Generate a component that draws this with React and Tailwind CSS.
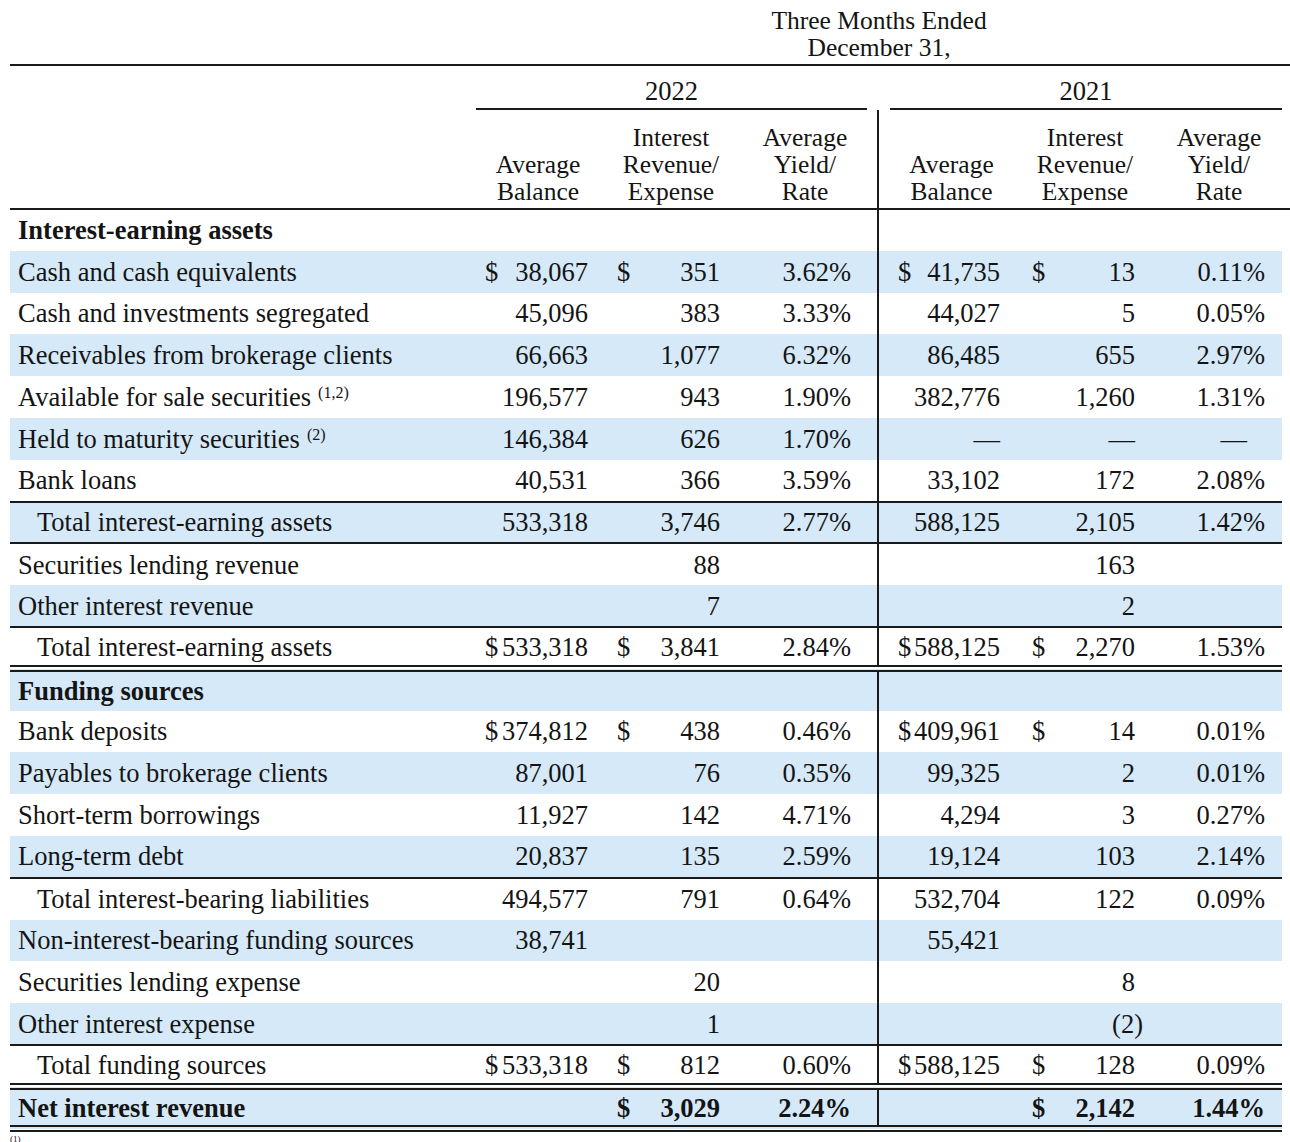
import React from "react";

// each row: label, 6 values (2022 balance/interest/yield, 2021 balance/interest/yield)
const rows = [
  { label: "Interest-earning assets", bold: true, values: ["", "", "", "", "", ""] },
  { label: "Cash and cash equivalents", dollar: true, values: ["38,067", "351", "3.62%", "41,735", "13", "0.11%"] },
  { label: "Cash and investments segregated", values: ["45,096", "383", "3.33%", "44,027", "5", "0.05%"] },
  { label: "Receivables from brokerage clients", values: ["66,663", "1,077", "6.32%", "86,485", "655", "2.97%"] },
  { label: "Available for sale securities", sup: "(1,2)", values: ["196,577", "943", "1.90%", "382,776", "1,260", "1.31%"] },
  { label: "Held to maturity securities", sup: "(2)", values: ["146,384", "626", "1.70%", "—", "—", "—"] },
  { label: "Bank loans", line: "single", values: ["40,531", "366", "3.59%", "33,102", "172", "2.08%"] },
  { label: "Total interest-earning assets", indent: true, line: "single", values: ["533,318", "3,746", "2.77%", "588,125", "2,105", "1.42%"] },
  { label: "Securities lending revenue", values: ["", "88", "", "", "163", ""] },
  { label: "Other interest revenue", line: "single", values: ["", "7", "", "", "2", ""] },
  { label: "Total interest-earning assets", indent: true, dollar: true, line: "double", values: ["533,318", "3,841", "2.84%", "588,125", "2,270", "1.53%"] },
  { label: "Funding sources", bold: true, values: ["", "", "", "", "", ""] },
  { label: "Bank deposits", dollar: true, values: ["374,812", "438", "0.46%", "409,961", "14", "0.01%"] },
  { label: "Payables to brokerage clients", values: ["87,001", "76", "0.35%", "99,325", "2", "0.01%"] },
  { label: "Short-term borrowings", values: ["11,927", "142", "4.71%", "4,294", "3", "0.27%"] },
  { label: "Long-term debt", line: "single", values: ["20,837", "135", "2.59%", "19,124", "103", "2.14%"] },
  { label: "Total interest-bearing liabilities", indent: true, values: ["494,577", "791", "0.64%", "532,704", "122", "0.09%"] },
  { label: "Non-interest-bearing funding sources", values: ["38,741", "", "", "55,421", "", ""] },
  { label: "Securities lending expense", values: ["", "20", "", "", "8", ""] },
  { label: "Other interest expense", line: "single", values: ["", "1", "", "", "(2)", ""] },
  { label: "Total funding sources", indent: true, dollar: true, line: "double", values: ["533,318", "812", "0.60%", "588,125", "128", "0.09%"] },
  { label: "Net interest revenue", bold: true, dollar: true, line: "double", values: ["", "3,029", "2.24%", "", "2,142", "1.44%"] },
];

const pads = [
  "pl-[9px] pr-[12px]",
  "pl-[17px] pr-[13px]",
  "pr-[26px]",
  "pl-[19px] pr-[12px]",
  "pl-[20px] pr-[13px]",
  "pr-[17px]",
];

const headPads = ["", "pl-[9px]", "", "pl-[12px]", "pl-[10px]", "pl-[8px]"];

const heads = [
  ["Average", "Balance"],
  ["Interest", "Revenue/", "Expense"],
  ["Average", "Yield/", "Rate"],
  ["Average", "Balance"],
  ["Interest", "Revenue/", "Expense"],
  ["Average", "Yield/", "Rate"],
];

function ValueCell({ value, index, dollar, border }) {
  const isYield = index === 2 || index === 5;
  const divider = index === 2 ? "border-r-2 border-r-[#1a1a1a]" : "";
  let extra = "";
  if (value === "(2)") extra = "-mr-[8px]";
  if (value === "—" && index === 5) extra = "mr-[18px]";

  if (isYield) {
    return (
      <td className={`${pads[index]} ${divider} ${border} text-right`}>
        <span className={`inline-block ${extra}`}>{value}</span>
      </td>
    );
  }
  return (
    <td className={`${pads[index]} ${divider} ${border}`}>
      <div className="flex justify-between">
        <span>{dollar && value ? "$" : ""}</span>
        <span className={extra}>{value}</span>
      </div>
    </td>
  );
}

export default function App() {
  return (
    <div className="w-[1290px] h-[1142px] overflow-hidden bg-white text-[#141414] text-[26.5px] font-['Liberation_Serif','Times_New_Roman',serif]">
      <table className="ml-[10px] w-[1280px] table-fixed border-collapse">
        <colgroup>
          <col className="w-[466px]" />
          <col className="w-[124px]" />
          <col className="w-[133px]" />
          <col className="w-[145px]" />
          <col className="w-[134px]" />
          <col className="w-[136px]" />
          <col className="w-[134px]" />
          <col className="w-[8px]" />
        </colgroup>
        <thead>
          <tr>
            <th className="border-b-2 border-[#1a1a1a]" />
            <th
              colSpan={6}
              className="border-b-2 border-[#1a1a1a] pt-[7px] pb-[3px] text-center text-[25.5px] font-normal leading-[27px]"
            >
              <div>Three Months Ended</div>
              <div>December 31,</div>
            </th>
            <th className="border-b-2 border-[#1a1a1a]" />
          </tr>
          <tr>
            <th />
            <th colSpan={3} className="h-[45px] align-bottom font-normal">
              <div className="mr-[11px] border-b-2 border-[#1a1a1a] pb-[3px] text-center leading-[27px]">
                2022
              </div>
            </th>
            <th colSpan={3} className="h-[45px] align-bottom font-normal">
              <div className="ml-[12px] border-b-2 border-[#1a1a1a] pb-[3px] text-center leading-[27px]">
                2021
              </div>
            </th>
            <th />
          </tr>
          <tr>
            <th className="border-b-2 border-[#1a1a1a]" />
            {heads.map((h, i) => (
              <th
                key={i}
                className={`h-[99px] align-bottom border-b-2 border-[#1a1a1a] pb-[3px] text-center text-[25.5px] font-normal leading-[27px] ${headPads[i]} ${
                  i === 2 ? "border-r-2 border-r-[#1a1a1a]" : ""
                }`}
              >
                {h.map((line, j) => (
                  <div key={j}>{line}</div>
                ))}
              </th>
            ))}
            <th className="border-b-2 border-[#1a1a1a]" />
          </tr>
        </thead>
        <tbody>
          {rows.map((row, r) => {
            const bg = r % 2 === 1 ? "bg-[#d5e9f8]" : "";
            const border =
              row.line === "single"
                ? "border-b-2 border-b-[#1a1a1a]"
                : row.line === "double"
                ? "border-b-[7px] border-double border-b-[#1a1a1a]"
                : "";
            return (
              <tr key={r} className={`h-[41.8px] leading-[28px] ${row.bold ? "font-bold" : ""}`}>
                <td className={`${bg} ${border} ${row.indent ? "pl-[27px]" : "pl-[8px]"} whitespace-nowrap`}>
                  {row.label}
                  {row.sup && (
                    <sup className="ml-[7px] text-[16px] font-normal">{row.sup}</sup>
                  )}
                </td>
                {row.values.map((v, i) => (
                  <ValueCell
                    key={i}
                    value={v}
                    index={i}
                    dollar={row.dollar}
                    border={`${bg} ${border}`}
                  />
                ))}
                <td />
              </tr>
            );
          })}
        </tbody>
      </table>
      <p className="ml-[10px] mt-[3px] text-[12px] leading-[14px]">
        <sup>(1)</sup>
      </p>
    </div>
  );
}
